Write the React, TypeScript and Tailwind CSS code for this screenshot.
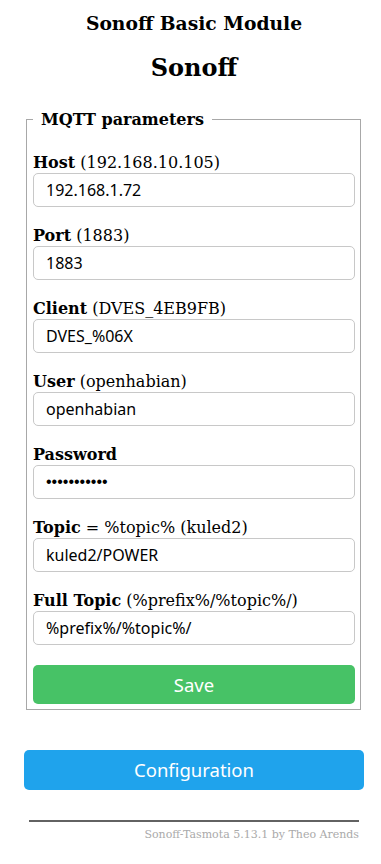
import React from "react";

const serif = { fontFamily: '"DejaVu Serif", serif' };

type Row = { bold: string; rest: string; value: string; password?: boolean };

const rows: Row[] = [
  { bold: "Host", rest: " (192.168.10.105)", value: "192.168.1.72" },
  { bold: "Port", rest: " (1883)", value: "1883" },
  { bold: "Client", rest: " (DVES_4EB9FB)", value: "DVES_%06X" },
  { bold: "User", rest: " (openhabian)", value: "openhabian" },
  { bold: "Password", rest: "", value: "•••••••••••", password: true },
  { bold: "Topic", rest: " = %topic% (kuled2)", value: "kuled2/POWER" },
  { bold: "Full Topic", rest: " (%prefix%/%topic%/)", value: "%prefix%/%topic%/" },
];

function Field({ row, first }: { row: Row; first: boolean }) {
  return (
    <div className={first ? "" : "mt-[19px]"}>
      <div className="text-[16px] leading-[19px] text-black font-['DejaVu_Serif',serif]">
        <b>{row.bold}</b>
        {row.rest}
      </div>
      <div className="mt-[1px] h-[34px] w-[322px] border border-[#c8c8c8] rounded-[5px] bg-white pl-[12px] flex items-center text-[16px] text-black font-['Noto_Sans',sans-serif]">
        {row.password ? (
          <span className="text-[16px] font-['Liberation_Sans',sans-serif]">{row.value}</span>
        ) : (
          row.value
        )}
      </div>
    </div>
  );
}

export default function App() {
  return (
    <div className="w-[381px] min-h-[864px] bg-white text-black" style={serif}>
      <div className="ml-[24px] w-[340px] pt-[12px]">
        <div className="text-center font-bold text-[18.72px] leading-[22px] font-['DejaVu_Serif',serif]">
          Sonoff Basic Module
        </div>
        <div className="text-center font-bold text-[24px] leading-[28px] mt-[20px] font-['DejaVu_Serif',serif]">
          Sonoff
        </div>
        <fieldset className="mt-[28px] ml-[2px] w-[335px] border border-[#a8a8a8] pl-[6px] pr-[5px] pb-[5px] pt-[24px]">
          <legend className="px-[8px] font-bold text-[16px] leading-[19px] font-['DejaVu_Serif',serif]">
            MQTT parameters
          </legend>
          {rows.map((r, i) => (
            <Field key={r.bold} row={r} first={i === 0} />
          ))}
          <div className="mt-[20px] h-[39px] w-[322px] rounded-[5px] bg-[#47c266] text-white text-center text-[18.5px] leading-[39px] font-['Noto_Sans',sans-serif]">
            Save
          </div>
        </fieldset>
        <div className="mt-[40px] h-[40px] w-[340px] rounded-[5px] bg-[#1fa3ec] text-white text-center text-[18.5px] leading-[40px] font-['Noto_Sans',sans-serif]">
          Configuration
        </div>
        <div className="mt-[30px] ml-[5px] w-[330px] border-t-2 border-[#626262]"></div>
        <div className="ml-[5px] w-[330px] text-right text-[11px] leading-[16px] mt-[5px] text-[#aaaaaa] font-['DejaVu_Serif',serif]">
          Sonoff-Tasmota 5.13.1 by Theo Arends
        </div>
      </div>
    </div>
  );
}
